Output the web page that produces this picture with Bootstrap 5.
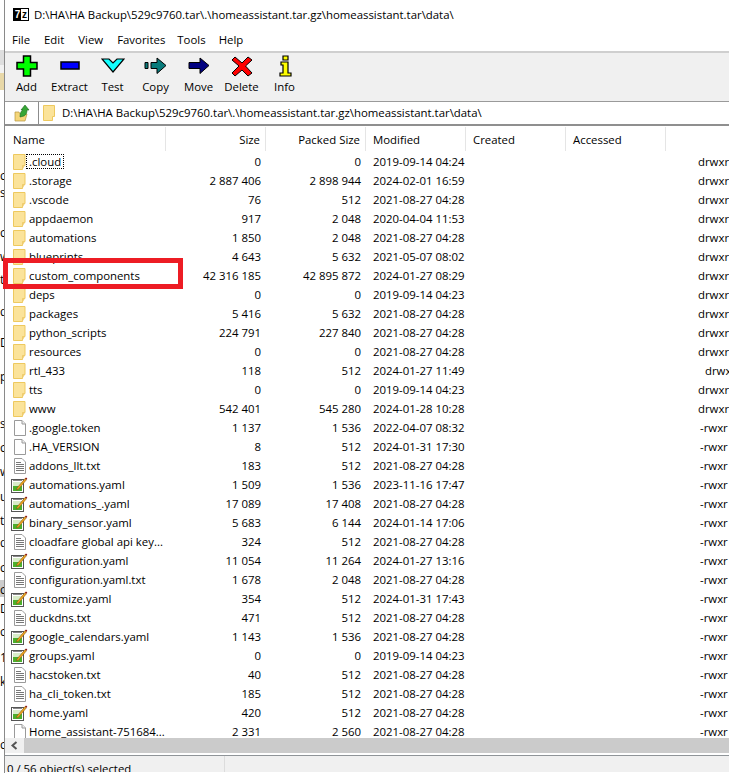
<!DOCTYPE html>
<html lang="en">
<head>
<meta charset="utf-8">
<title>7-Zip</title>
<link href="https://cdn.jsdelivr.net/npm/bootstrap@5.3.0/dist/css/bootstrap.min.css" rel="stylesheet">
<style>
html,body{height:773px;overflow:hidden;background:#fff}
body{font-family:"Open Sans","Noto Sans","Liberation Sans",sans-serif;font-size:11.4px;color:#000;line-height:1}
.behind{width:5px;height:773px;flex:none;border-right:1px solid #8a8a8a;overflow:hidden;background:linear-gradient(#fff 0 50px,#dedede 50px 65px,#f2f2f2 65px 73px,#e8d8a8 73px 90px,#fff 90px 580px,#ccc 580px 597px,#fff 597px);white-space:nowrap}
.frag{height:12px;overflow:visible;line-height:1;font-size:12px}
.app{height:773px;min-width:0}
.titlebar{height:29px;padding-left:8px;gap:5px;white-space:nowrap;overflow:hidden}
.logo7z{width:16px;height:13px;background:#000;border:1px solid #000;flex:none;display:flex}
.logo7z b{flex:1;text-align:center;font:bold 10px/11px "Liberation Sans",sans-serif}
.logo7z .l1{color:#fff;background:#000}
.logo7z .l2{color:#000;background:#fff}
.menubar{height:22px;padding-left:7px;gap:14px;padding-bottom:1px}
.mfav{margin-right:-2px}
.mtools{margin-right:-1px}
.toolbar{height:51px;background:#f0f0f0;border-top:2px solid #cfcfcf;border-bottom:1px solid #9a9a9a}
.tool{width:43px;height:48px;padding-top:2px;gap:4px;flex:none}
.tool svg{width:24px;height:22px}
.addr{height:24px;background:#f0f0f0;border-bottom:2px solid #8f8f8f}
.upbtn{width:33px;flex:none;background:#fff}
.pathbox{background:#fff;border-left:1px solid #8c8c8c;height:22px;padding-left:4px;gap:7px;white-space:nowrap;overflow:hidden}
.folderico{width:12px;height:16px;flex:none}
.thead{height:25px;padding-top:1px}
.th{height:24px;flex:none;border-right:1px solid #e5e5e5;padding:7px 5px 0 7px}
.hw1{width:161px;padding-left:8px}.hw{width:100px}
.rw{height:19px;white-space:nowrap}
.c1{width:156px;flex:none;gap:2px;padding-left:8px}
.c2{width:100px;flex:none;text-align:right}
.c3{width:100px;flex:none;text-align:right}
.c4{width:112px;flex:none;padding-left:12px}
.listwrap{position:relative;height:587px}
.rows{height:587px;overflow:hidden;padding-top:1px}
.fic{width:14px;height:16px;flex:none}
.fic.yml{width:17px;margin-left:-2px;margin-right:-1px}
.dotted{outline:1px dotted #000;padding:1px 2px;margin-left:-2px}
.hilite{position:absolute;left:-2px;top:107px;width:180px;height:31px;border:5px solid #ed1c24}
.hscroll{height:15px;background:#cbcbcb}
.arrowcell{width:19px;background:#f0f0f0;flex:none}
.gapbar{height:2px;background:#fff}
.statusbar{height:17px;background:#f0f0f0;border-top:1px solid #8f9498;overflow:hidden;white-space:nowrap}
.statuscell{width:220px;padding:7px 0 0 2px;border-right:1px solid #dcdcdc}
</style>
</head>
<body>
<div class="d-flex app">
<div class="behind" id="bg"></div>
<div class="flex-grow-1 d-flex flex-column app">
  <div class="titlebar d-flex align-items-center"><span class="logo7z"><b class="l1">7</b><b class="l2">z</b></span><span>D:\HA\HA Backup\529c9760.tar\.\homeassistant.tar.gz\homeassistant.tar\data\</span></div>
  <div class="menubar d-flex align-items-center"><span>File</span><span>Edit</span><span>View</span><span class="mfav">Favorites</span><span class="mtools">Tools</span><span>Help</span></div>
  <div class="toolbar d-flex">
    <div class="tool d-flex flex-column align-items-center"><svg viewBox="0 0 24 22"><path d="M8.500 1h7v6.500H22v6.500h-6.500v7h-7v-7H2V7.500h6.500z" fill="#0f0" stroke="#000" stroke-width="1.500"/></svg><span>Add</span></div>
    <div class="tool d-flex flex-column align-items-center"><svg viewBox="0 0 24 22"><rect x="3" y="7" width="18" height="7" fill="#00f" stroke="#000" stroke-width="1.500"/></svg><span>Extract</span></div>
    <div class="tool d-flex flex-column align-items-center"><svg viewBox="0 0 24 22"><path d="M1 4h7l4 4 4-4h7L12 17z" fill="#1ff" stroke="#000" stroke-width="1.200"/></svg><span>Test</span></div>
    <div class="tool d-flex flex-column align-items-center"><svg viewBox="0 0 24 22"><path d="M1 7.500h3v6H1zM7 7.500h6V3l9 7.500-9 8v-5H7z" fill="#087b7b" stroke="#000" stroke-width="1"/></svg><span>Copy</span></div>
    <div class="tool d-flex flex-column align-items-center"><svg viewBox="0 0 24 22"><path d="M2 7.500h11V3l9 7.500-9 8v-5H2z" fill="#00007f" stroke="#000" stroke-width="1"/></svg><span>Move</span></div>
    <div class="tool d-flex flex-column align-items-center"><svg viewBox="0 0 24 22"><path d="M5 2l7 6 6-6 4 3-6.500 6 6.500 7-4 3-6-6-7 6-3-3 7-7-7-6z" fill="#f00" stroke="#000" stroke-width="1"/></svg><span>Delete</span></div>
    <div class="tool d-flex flex-column align-items-center"><svg viewBox="0 0 24 22"><path d="M10 1h5v4h-5zM8 7h7v11h3v3H7v-3h3v-8H8z" fill="#ff0" stroke="#000" stroke-width="1.200"/></svg><span>Info</span></div>
  </div>
  <div class="addr d-flex">
    <div class="upbtn d-flex align-items-center justify-content-center"><svg width="18" height="18" viewBox="0 0 18 18"><path d="M2 8h4l1 2h7l-2 7H2z" fill="#f5d67a" stroke="#b8973c" stroke-width=".7"/><path d="M7 13c0-4 1-6 3-7H8l4-5 4 5h-2c0 3-1 5-3 6z" fill="#36a636" stroke="#1c6a1c" stroke-width=".6"/></svg></div>
    <div class="pathbox flex-grow-1 d-flex align-items-center"><svg class="folderico" viewBox="0 0 12 16"><path d="M.500.500h11v11h-2v4H.500z" fill="#fbe39a" stroke="#eec95e"/></svg><span>D:\HA\HA Backup\529c9760.tar\.\homeassistant.tar.gz\homeassistant.tar\data\</span></div>
  </div>
  <div class="thead d-flex">
    <div class="th hw1">Name</div>
    <div class="th hw text-end">Size</div>
    <div class="th hw text-end">Packed Size</div>
    <div class="th hw">Modified</div>
    <div class="th hw">Created</div>
    <div class="th hw">Accessed</div>
  </div>
  <div class="listwrap">
    <div class="rows" id="rows"></div>
    <div class="hilite"></div>
  </div>
  <div class="hscroll d-flex"><div class="arrowcell d-flex align-items-center justify-content-center"><svg width="9" height="9" viewBox="0 0 9 9"><path d="M6.500 1L2.500 4.500 6.500 8" fill="none" stroke="#555" stroke-width="2"/></svg></div></div>
  <div class="gapbar"></div>
  <div class="statusbar d-flex"><div class="statuscell">0 / 56 object(s) selected</div></div>
</div>
</div>
<script>
const d=[["d",".cloud","0","0","2019-09-14 04:24"],["d",".storage","2 887 406","2 898 944","2024-02-01 16:59"],["d",".vscode","76","512","2021-08-27 04:28"],["d","appdaemon","917","2 048","2020-04-04 11:53"],["d","automations","1 850","2 048","2021-08-27 04:28"],["d","blueprints","4 643","5 632","2021-05-07 08:02"],["d","custom_components","42 316 185","42 895 872","2024-01-27 08:29"],["d","deps","0","0","2019-09-14 04:23"],["d","packages","5 416","5 632","2021-08-27 04:28"],["d","python_scripts","224 791","227 840","2021-08-27 04:28"],["d","resources","0","0","2021-08-27 04:28"],["d","rtl_433","118","512","2024-01-27 11:49"],["d","tts","0","0","2019-09-14 04:23"],["d","www","542 401","545 280","2024-01-28 10:28"],["b",".google.token","1 137","1 536","2022-04-07 08:32"],["b",".HA_VERSION","8","512","2024-01-31 17:30"],["t","addons_llt.txt","183","512","2021-08-27 04:28"],["y","automations.yaml","1 509","1 536","2023-11-16 17:47"],["y","automations_.yaml","17 089","17 408","2021-08-27 04:28"],["y","binary_sensor.yaml","5 683","6 144","2024-01-14 17:06"],["t","cloadfare global api key...","324","512","2021-08-27 04:28"],["y","configuration.yaml","11 054","11 264","2024-01-27 13:16"],["t","configuration.yaml.txt","1 678","2 048","2021-08-27 04:28"],["y","customize.yaml","354","512","2024-01-31 17:43"],["t","duckdns.txt","471","512","2021-08-27 04:28"],["y","google_calendars.yaml","1 143","1 536","2021-08-27 04:28"],["y","groups.yaml","0","0","2019-09-14 04:23"],["t","hacstoken.txt","40","512","2021-08-27 04:28"],["t","ha_cli_token.txt","185","512","2021-08-27 04:28"],["y","home.yaml","420","512","2021-08-27 04:28"],["b","Home_assistant-751684...","2 331","2 560","2021-08-27 04:28"]];
const ic={
d:'<svg class="fic" viewBox="0 0 14 16"><path d="M.5.500h11.500v11h-2.500v4H.5z" fill="#fbe39a" stroke="#eec95e"/><path d="M9.500 11.500h2.500l-2.500 4z" fill="#f0cf78"/></svg>',
b:'<svg class="fic" viewBox="0 0 14 16"><path d="M1.500.5h7.500l3.500 3.500v11.500h-11z" fill="#fff" stroke="#9a9a9a"/><path d="M9 .5v3.500h3.500" fill="#eee" stroke="#9a9a9a"/></svg>',
t:'<svg class="fic" viewBox="0 0 14 16"><path d="M1.500.5h7.500l3.500 3.500v11.500h-11z" fill="#fff" stroke="#9a9a9a"/><path d="M3 4.500h5M3 6.500h8M3 8.500h8M3 10.500h8M3 12.500h8" stroke="#777"/></svg>',
y:'<svg class="fic yml" viewBox="0 0 17 16"><rect x=".5" y="2.500" width="12" height="13" fill="#fff" stroke="#555"/><path d="M2 3.500h9" stroke="#888"/><rect x="2" y="5" width="9" height="4" fill="#d8ecc8"/><rect x="2" y="9" width="9" height="5" fill="#4caf2c"/><path d="M6 11L14 1.500l1.500 1.200-8 9.500-2 .8z" fill="#eea520" stroke="#7a4a10" stroke-width=".5"/><path d="M14 1.500l1-1 1.300 1-1 1.200z" fill="#8a1010"/></svg>'};
let h='';
d.forEach((r,i)=>{const nm=i==0?`<span class="dotted">${r[1]}</span>`:`<span>${r[1]}</span>`;
let attr,pad;
if(r[0]=='d'){attr=r[1]=='rtl_433'?'drwx':'drwxr';pad=r[1]=='rtl_433'?705:698}else{attr='-rwxr';pad=700}
h+=`<div class="rw d-flex align-items-center"><div class="c1 d-flex align-items-center">${ic[r[0]]}${nm}</div><div class="c2">${r[2]}</div><div class="c3">${r[3]}</div><div class="c4">${r[4]}</div><div style="margin-left:${pad-473}px">${attr}</div></div>`;});
document.getElementById('rows').innerHTML=h;
const fr=[[176,'cl'],[193,'s'],[233,'c'],[257,'w'],[280,'t:'],[312,'d'],[343,'D'],[377,'p'],[424,'s'],[448,'c'],[472,'w'],[497,'u'],[521,'tt'],[543,'d'],[568,'c'],[590,'c'],[609,'D'],[632,'c'],[658,'1'],[682,'k'],[745,'c']];
let p=0,b='';fr.forEach(([y,t])=>{b+=`<div style="height:${y-6-p}px"></div><div class="frag">${t}</div>`;p=y+6;});
document.getElementById('bg').innerHTML=b;
</script>
<script src="https://cdn.jsdelivr.net/npm/bootstrap@5.3.0/dist/js/bootstrap.bundle.min.js"></script>
</body>
</html>
